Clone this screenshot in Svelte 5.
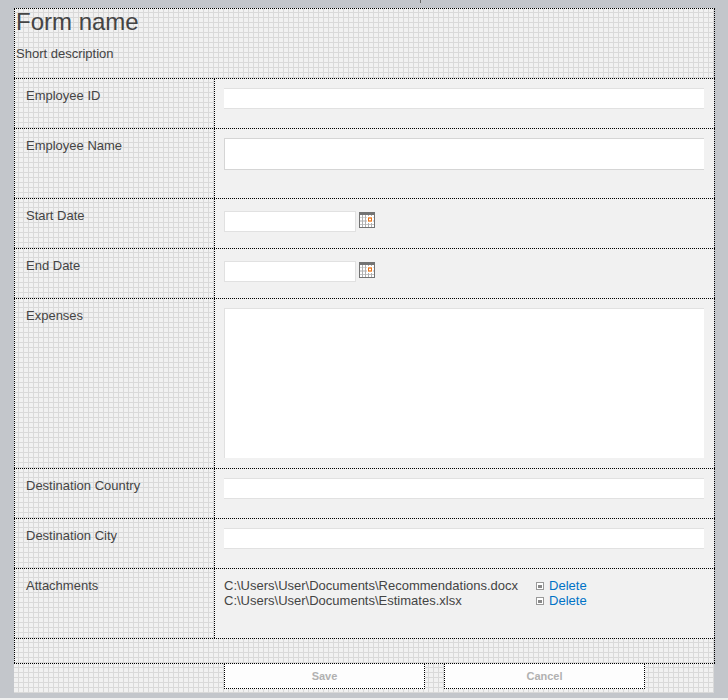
<script lang="ts">
	type Field = {
		id: string;
		label: string;
		kind: 'text' | 'multi' | 'date' | 'files';
		size: 'small' | 'medium' | 'large';
	};

	let title = $state('Form name');
	let description = $state('Short description');

	const fields: Field[] = [
		{ id: 'employee-id', label: 'Employee ID', kind: 'text', size: 'small' },
		{ id: 'employee-name', label: 'Employee Name', kind: 'multi', size: 'medium' },
		{ id: 'start-date', label: 'Start Date', kind: 'date', size: 'small' },
		{ id: 'end-date', label: 'End Date', kind: 'date', size: 'small' },
		{ id: 'expenses', label: 'Expenses', kind: 'multi', size: 'large' },
		{ id: 'country', label: 'Destination Country', kind: 'text', size: 'small' },
		{ id: 'city', label: 'Destination City', kind: 'text', size: 'small' },
		{ id: 'attachments', label: 'Attachments', kind: 'files', size: 'medium' }
	];

	let values = $state<Record<string, string>>({});
	let files = $state([
		'C:\\Users\\User\\Documents\\Recommendations.docx',
		'C:\\Users\\User\\Documents\\Estimates.xlsx'
	]);

	function removeFile(e: MouseEvent, file: string) {
		e.preventDefault();
		files = files.filter((f) => f !== file);
	}
</script>

<main class="designer">
	<form class="sheet" onsubmit={(e) => e.preventDefault()}>
		<header class="heading">
			<h1>{title}</h1>
			<p>{description}</p>
		</header>

		{#each fields as field}
			<div class="row {field.size}">
				{#if field.kind === 'files'}
					<span class="label">{field.label}</span>
				{:else}
					<label class="label" for={field.id}>{field.label}</label>
				{/if}

				<div class="cell {field.kind}">
					{#if field.kind === 'text'}
						<input id={field.id} type="text" bind:value={values[field.id]} />
					{:else if field.kind === 'multi'}
						<textarea id={field.id} bind:value={values[field.id]}></textarea>
					{:else if field.kind === 'date'}
						<input id={field.id} type="text" bind:value={values[field.id]} />
						<button type="button" class="calendar" aria-label="Pick {field.label}">
							<svg width="16" height="16" viewBox="0 0 16 16" shape-rendering="crispEdges">
								<rect width="16" height="16" fill="#737373" />
								<rect x="1" y="3" width="14" height="12" fill="#fff" />
								<path d="M1 5h14v1H1zM1 8h14v2H1z" fill="#d6d6d6" />
								<path d="M1 12h14v1H1z" fill="#c4c4c4" />
								<path
									d="M3 3h1v12H3zM6 3h1v12H6zM9 3h1v12H9zM12 3h1v12h-1z"
									fill="#b0b0b0"
								/>
								<rect x="8" y="4" width="6" height="7" fill="#fff" />
								<rect x="9" y="5" width="4" height="5" fill="#f3a566" />
								<path d="M9 6h1v3H9zM12 6h1v3h-1z" fill="#e8731a" />
								<rect x="10" y="7" width="2" height="1" fill="#fff" />
							</svg>
						</button>
					{:else}
						<table aria-label="Attachments">
							<tbody>
								{#each files as file}
									<tr>
										<td class="path">{file}</td>
										<td>
											<a href="#delete" onclick={(e) => removeFile(e, file)}>
												<svg width="8" height="8" viewBox="0 0 8 8" shape-rendering="crispEdges">
													<rect width="8" height="8" fill="#999" />
													<rect x="1" y="1" width="6" height="6" fill="#fff" />
													<rect x="2" y="3" width="4" height="3" fill="#888" />
												</svg>Delete</a
											>
										</td>
									</tr>
								{/each}
							</tbody>
						</table>
					{/if}
				</div>
			</div>
		{/each}

		<div class="spacer"></div>

		<footer class="actions">
			<button type="submit">Save</button>
			<button type="button">Cancel</button>
		</footer>
	</form>
</main>

<style>
	:global(body) {
		margin: 0;
		background: #f0f0f0;
	}

	.designer {
		position: relative;
		padding: 8px 13px 5px 14px;
		background: #c3c6cb;
		color: #444;
		font: 13px/15px 'Liberation Sans', Arial, sans-serif;
	}

	/* tail of the splitter mark above the sheet */
	.designer::before {
		content: '';
		position: absolute;
		top: 0;
		left: 420px;
		width: 1px;
		height: 3px;
		background: #666;
	}

	.sheet {
		padding-right: 1px;
		background:
			repeating-linear-gradient(to right, transparent 0 4px, #d9d9d9 4px 5px),
			repeating-linear-gradient(to bottom, #f1f1f1 0 4px, #d9d9d9 4px 5px);
		background-clip: content-box;
		background-origin: content-box;
	}

	.heading,
	.row,
	.spacer {
		box-sizing: border-box;
		margin-right: -1px;
		border: 1px dotted #000;
		border-bottom: 0;
	}

	.heading {
		height: 70px;
		padding-left: 1px;
	}

	h1 {
		margin: 0;
		font-size: 24px;
		font-weight: normal;
		line-height: 26px;
	}

	p {
		margin: 11px 0 0;
	}

	.row {
		display: grid;
		grid-template-columns: 199px 1fr;
	}

	.small {
		min-height: 50px;
	}

	.medium {
		min-height: 70px;
	}

	.large {
		min-height: 170px;
	}

	.label {
		padding: 9px 11px;
	}

	.cell {
		padding: 9px 10px 9px 9px;
		border-left: 1px dotted #000;
		background: #f1f1f1;
	}

	input,
	textarea {
		display: block;
		box-sizing: border-box;
		width: 100%;
		height: 21px;
		margin: 0;
		padding: 2px 4px;
		border: 1px solid #e1e1e1;
		border-width: 1px 0;
		border-radius: 0;
		background: #fff;
		color: inherit;
		font: inherit;
		resize: none;
	}

	.medium textarea {
		height: 32px;
		border-color: #d5d5d5;
		border-width: 1px 0 1px 1px;
	}

	.large textarea {
		height: 150px;
		border-width: 1px 0 0 1px;
	}

	.date {
		display: flex;
		align-items: flex-start;
		gap: 3px;
		padding-top: 12px;
	}

	.date input {
		width: 132px;
		border-width: 1px;
	}

	.calendar {
		padding: 1px 0 0;
		border: 0;
		background: none;
		cursor: pointer;
	}

	.calendar svg {
		display: block;
	}

	table {
		border-collapse: collapse;
	}

	td {
		padding: 0;
	}

	.path {
		padding-right: 18px;
	}

	a {
		display: flex;
		align-items: center;
		gap: 5px;
		color: #0072c6;
		text-decoration: none;
	}

	.spacer {
		height: 25px;
	}

	.actions {
		display: flex;
		gap: 19px;
		box-sizing: border-box;
		height: 30px;
		margin-right: -1px;
		padding-left: 210px;
		border-top: 1px dotted #000;
	}

	.actions button {
		width: 201px;
		height: 25px;
		padding: 0;
		border: 1px dotted #000;
		border-top: 0;
		border-radius: 0;
		background: #fdfdfd;
		color: #b1b1b1;
		font: bold 11px/15px 'Liberation Sans', Arial, sans-serif;
	}
</style>
